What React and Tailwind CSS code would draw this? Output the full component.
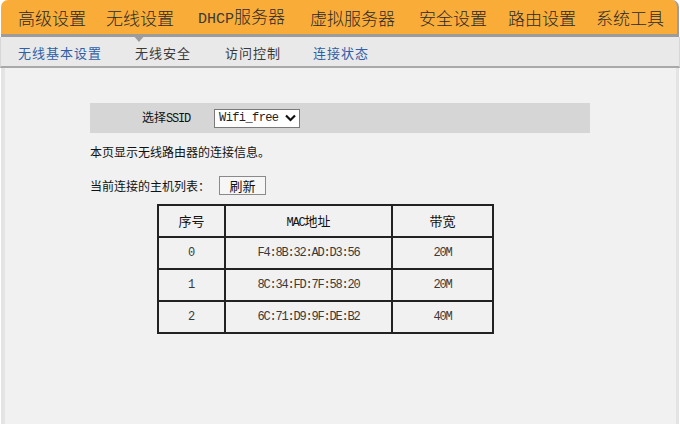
import React from "react";

const cjk = { fontFamily: '"Noto Sans CJK SC", "Noto Sans", sans-serif' };
const mono = { fontFamily: '"Liberation Mono", "Noto Sans CJK SC", monospace' };

function Chevron() {
  return (
    <svg width="11" height="8" viewBox="0 0 11 8" className="shrink-0">
      <path d="M1 1.5 L5.5 6 L10 1.5" fill="none" stroke="#111" strokeWidth="2.2" />
    </svg>
  );
}

export default function App() {
  const rows = [
    ["0", "F4:8B:32:AD:D3:56", "20M"],
    ["1", "8C:34:FD:7F:58:20", "20M"],
    ["2", "6C:71:D9:9F:DE:B2", "40M"],
  ];
  return (
    <div className="w-[680px] h-[424px] bg-white overflow-hidden flex flex-col" style={cjk}>
      {/* top nav */}
      <div className="relative mx-[1px] h-[37px] shrink-0 bg-[#f9ac38] rounded-t-[7px] border-b-[3px] border-r-[2px] border-[#9c9c9c] flex items-center text-[17px] font-light text-[#2a2a2a] pl-[17px] leading-none">
        <span>高级设置</span>
        <span className="ml-[20px]">无线设置</span>
        <span className="ml-[24px]">
          <span className="text-[15px] text-[#3a3a3a]" style={mono}>DHCP</span>服务器
        </span>
        <span className="ml-[25px]">虚拟服务器</span>
        <span className="ml-[24px]">安全设置</span>
        <span className="ml-[21px]">路由设置</span>
        <span className="ml-[20px]">系统工具</span>
        <div className="absolute left-[131px] top-[34px] w-0 h-0 border-l-[7px] border-r-[7px] border-t-[8px] border-l-transparent border-r-transparent border-t-[#9c9c9c]" />
      </div>
      {/* sub nav */}
      <div className="h-[31px] shrink-0 bg-[#e9e9e9] border-b-[2px] border-[#a9a9a9] border-x border-x-[#d6d6d6] flex items-center pt-[2px] text-[13px] tracking-[1px] leading-none">
        <span className="ml-[17px] text-[#2f5fa8]">无线基本设置</span>
        <span className="ml-[33px] text-[#3a3a3a]">无线安全</span>
        <span className="ml-[34px] text-[#3a3a3a]">访问控制</span>
        <span className="ml-[32px] text-[#2f5fa8]">连接状态</span>
      </div>
      {/* content */}
      <div className="flex-1 bg-[#f1f1f1] mx-[1px] border-l-[4px] border-l-[#e4e4e4] border-r-[3px] border-r-[#e4e4e4] pl-[85px] pt-[35px] text-[12px] text-[#111]">
        <div className="w-[500px] h-[30px] bg-[#d6d6d6] flex items-center pl-[52px]">
          <span>
            选择<span className="text-[12px] tracking-[-1.2px]" style={mono}>SSID</span>
          </span>
          <div className="ml-[24px] w-[86px] h-[19px] bg-white border border-[#7a7a7a] flex items-center justify-between pl-[4px] pr-[3px]">
            <span className="text-[12px] tracking-[-0.6px] text-[#222]" style={mono}>Wifi_free</span>
            <Chevron />
          </div>
        </div>
        <div className="mt-[12px] leading-[14px]">本页显示无线路由器的连接信息。</div>
        <div className="mt-[17px] flex items-center">
          <span>当前连接的主机列表：</span>
          <div className="ml-[9px] w-[47px] h-[19px] bg-[#f6f6f6] border border-[#8a8a8a] flex items-center justify-center text-[13px] leading-none">
            刷新
          </div>
        </div>
        <table className="mt-[9px] ml-[67px] border-collapse table-fixed w-[335px] text-center">
          <colgroup>
            <col className="w-[67px]" />
            <col className="w-[167px]" />
            <col className="w-[101px]" />
          </colgroup>
          <thead>
            <tr className="h-[32px]">
              <td className="border-2 border-[#222] text-[13px]">序号</td>
              <td className="border-2 border-[#222] text-[13px]">
                <span className="text-[12px] tracking-[-1.2px]" style={mono}>MAC</span>地址
              </td>
              <td className="border-2 border-[#222] text-[13px]">带宽</td>
            </tr>
          </thead>
          <tbody>
            {rows.map((r) => (
              <tr key={r[0]} className="h-[32px] text-[12px] text-[#3a3a3a]" style={mono}>
                <td className="border-2 border-[#222]">{r[0]}</td>
                <td className="border-2 border-[#222] tracking-[-1.2px]">{r[1]}</td>
                <td className="border-2 border-[#222] tracking-[-1.2px]">{r[2]}</td>
              </tr>
            ))}
          </tbody>
        </table>
      </div>
    </div>
  );
}
